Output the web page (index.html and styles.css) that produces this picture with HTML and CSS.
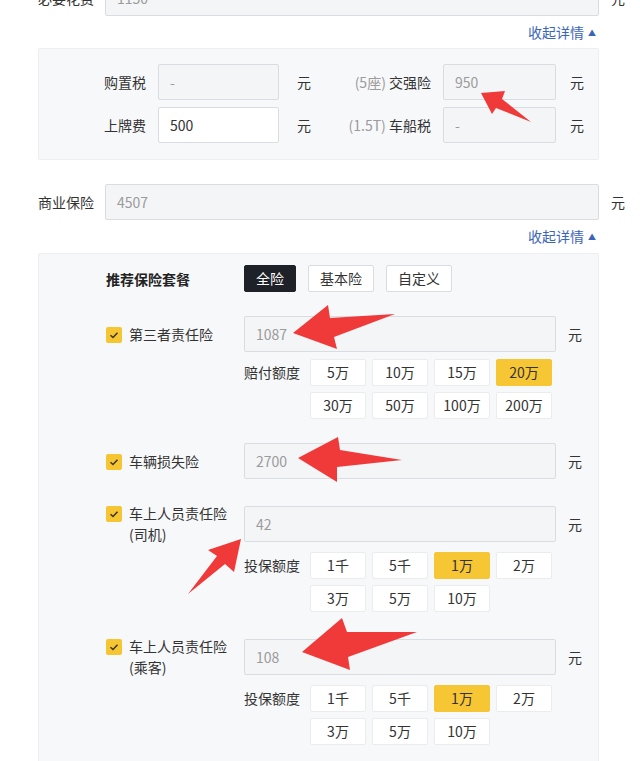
FILE: index.html
```html
<!DOCTYPE html>
<html lang="zh">
<head>
<meta charset="utf-8">
<title>保险费用</title>
<link rel="stylesheet" href="styles.css">
</head>
<body>
<div class="page">
  <div class="field field-top">
    <span class="field-label">必要花费</span>
    <div class="input is-disabled">1150</div>
    <span class="unit">元</span>
  </div>
  <div class="toggle-row"><span class="toggle">收起详情<span class="caret">▲</span></span></div>
  <div class="panel panel-fees">
    <span class="fee-label">购置税</span>
    <div class="input is-disabled">-</div>
    <span class="fee-unit">元</span>
    <span class="fee-label"><span class="muted">(5座)</span> 交强险</span>
    <div class="input is-disabled">950</div>
    <span class="fee-unit fee-unit-r">元</span>

    <span class="fee-label">上牌费</span>
    <div class="input">500</div>
    <span class="fee-unit">元</span>
    <span class="fee-label"><span class="muted">(1.5T)</span> 车船税</span>
    <div class="input is-disabled">-</div>
    <span class="fee-unit fee-unit-r">元</span>
  </div>

  <div class="field field-main">
    <span class="field-label">商业保险</span>
    <div class="input is-disabled">4507</div>
    <span class="unit">元</span>
  </div>
  <div class="toggle-row"><span class="toggle">收起详情<span class="caret">▲</span></span></div>

  <div class="panel panel-insure">
    <div class="plans">
      <span class="plans-title">推荐保险套餐</span>
      <div class="plan-btns">
        <span class="plan is-active">全险</span>
        <span class="plan">基本险</span>
        <span class="plan">自定义</span>
      </div>
    </div>

    <div class="items">
      <div class="item">
        <div class="item-name">
          <span class="check"><svg width="10" height="8" viewBox="0 0 10 8"><path d="M1.5 4.2 L4 6.5 L8.5 1.8" fill="none" stroke="#3a3320" stroke-width="1.5"/></svg></span>
          <span class="item-text">第三者责任险</span>
        </div>
        <div class="input is-disabled">1087</div>
        <span class="unit">元</span>
        <div class="opts">
          <span class="opts-label">赔付额度</span>
          <div class="opt-grid">
            <span class="opt">5万</span><span class="opt">10万</span><span class="opt">15万</span><span class="opt is-on">20万</span>
            <span class="opt">30万</span><span class="opt">50万</span><span class="opt">100万</span><span class="opt">200万</span>
          </div>
        </div>
      </div>

      <div class="item">
        <div class="item-name">
          <span class="check"><svg width="10" height="8" viewBox="0 0 10 8"><path d="M1.5 4.2 L4 6.5 L8.5 1.8" fill="none" stroke="#3a3320" stroke-width="1.5"/></svg></span>
          <span class="item-text">车辆损失险</span>
        </div>
        <div class="input is-disabled">2700</div>
        <span class="unit">元</span>
      </div>

      <div class="item">
        <div class="item-name">
          <span class="check"><svg width="10" height="8" viewBox="0 0 10 8"><path d="M1.5 4.2 L4 6.5 L8.5 1.8" fill="none" stroke="#3a3320" stroke-width="1.5"/></svg></span>
          <span class="item-text">车上人员责任险<br>(司机)</span>
        </div>
        <div class="input is-disabled">42</div>
        <span class="unit">元</span>
        <div class="opts">
          <span class="opts-label">投保额度</span>
          <div class="opt-grid">
            <span class="opt">1千</span><span class="opt">5千</span><span class="opt is-on">1万</span><span class="opt">2万</span>
            <span class="opt">3万</span><span class="opt">5万</span><span class="opt">10万</span>
          </div>
        </div>
      </div>

      <div class="item">
        <div class="item-name">
          <span class="check"><svg width="10" height="8" viewBox="0 0 10 8"><path d="M1.5 4.2 L4 6.5 L8.5 1.8" fill="none" stroke="#3a3320" stroke-width="1.5"/></svg></span>
          <span class="item-text">车上人员责任险<br>(乘客)</span>
        </div>
        <div class="input is-disabled">108</div>
        <span class="unit">元</span>
        <div class="opts">
          <span class="opts-label">投保额度</span>
          <div class="opt-grid">
            <span class="opt">1千</span><span class="opt">5千</span><span class="opt is-on">1万</span><span class="opt">2万</span>
            <span class="opt">3万</span><span class="opt">5万</span><span class="opt">10万</span>
          </div>
        </div>
      </div>
    </div>
  </div>
</div>

<svg class="marks" width="640" height="761" viewBox="0 0 640 761">
  <g fill="#f03a3a">
    <polygon points="481,93 505,91 502,99 531,122 496,108 492,114"/>
    <polygon points="293,333 328,305 330,318 395,314 334,337 337,349"/>
    <polygon points="298,458 338,437 340,450 402,460 337,467 337,482"/>
    <polygon points="241,539 234,572 225,564 188,594 217,556 208,550"/>
    <polygon points="302,652 342,618 347,632 417,632 348,657 350,670"/>
  </g>
</svg>
</body>
</html>
```

FILE: styles.css
```css
* { box-sizing: border-box; }

html, body {
  margin: 0;
  background: #fff;
}

body {
  position: relative;
  width: 640px;
  height: 761px;
  overflow: hidden;
  font-family: "Noto Sans CJK SC", "Microsoft YaHei", sans-serif;
  font-size: 14px;
  color: #333;
}

.page {
  padding-left: 38px;
}

/* top-level fields */
.field {
  display: grid;
  grid-template-columns: 67px 494px auto;
  align-items: center;
}

.field-top { margin-top: -20px; }
.field-main { margin-top: 24px; }

.field-label {
  text-align: right;
  padding-right: 12px;
  white-space: nowrap;
}

.input {
  height: 36px;
  line-height: 34px;
  border: 1px solid #d9dce1;
  border-radius: 2px;
  padding-left: 11px;
  background: #fff;
  color: #333;
  white-space: nowrap;
}

.input.is-disabled {
  background: #f4f5f7;
  color: #9b9b9b;
}

.unit {
  padding-left: 12px;
}

.toggle-row {
  width: 561px;
  height: 32px;
  line-height: 32px;
  text-align: right;
  padding-right: 3px;
}

.toggle {
  color: #3b66b8;
  font-size: 14px;
}

.caret {
  font-size: 8px;
  margin-left: 4px;
  vertical-align: 2px;
}

/* panels */
.panel {
  width: 561px;
  background: #f7f8fa;
  border: 1px solid #eceef1;
  border-radius: 2px;
}

.panel-fees {
  display: grid;
  grid-template-columns: 119px 121px 32px 132px 113px 1fr;
  row-gap: 7px;
  align-items: center;
  padding: 15px 0 16px;
}

.fee-label {
  text-align: right;
  padding-right: 12px;
  white-space: nowrap;
}

.fee-unit { padding-left: 18px; }
.fee-unit-r { padding-left: 14px; }

.muted { color: #9b9b9b; }

.panel-insure {
  margin-top: 1px;
  padding: 11px 0 40px 67px;
}

.plans {
  display: grid;
  grid-template-columns: 138px auto;
  align-items: center;
}

.plans-title {
  font-weight: 700;
  color: #222;
}

.plan-btns {
  display: flex;
  gap: 12px;
}

.plan {
  height: 27px;
  line-height: 25px;
  padding: 0 11px;
  border: 1px solid #d9dce1;
  border-radius: 2px;
  background: #fff;
}

.plan.is-active {
  background: #1e2128;
  border-color: #1e2128;
  color: #fff;
}

.items {
  display: flex;
  flex-direction: column;
  gap: 24px;
  margin-top: 24px;
}

.item {
  display: grid;
  grid-template-columns: 138px 312px auto;
  row-gap: 7px;
  align-items: center;
}

.item-name {
  display: flex;
  gap: 7px;
  line-height: 21px;
}

.check {
  flex: none;
  width: 16px;
  height: 16px;
  margin-top: 3px;
  border-radius: 2px;
  background: #f6c532;
  display: flex;
  align-items: center;
  justify-content: center;
}

.item-text { white-space: nowrap; }

.opts {
  grid-column: 2 / 4;
  display: flex;
}

.opts-label {
  width: 66px;
  line-height: 27px;
}

.opt-grid {
  display: grid;
  grid-template-columns: repeat(4, 56px);
  gap: 6px;
}

.opt {
  height: 27px;
  line-height: 25px;
  border: 1px solid #ebecee;
  border-radius: 2px;
  background: #fff;
  text-align: center;
}

.opt.is-on {
  background: #f7c634;
  border-color: #f7c634;
}

.marks {
  position: absolute;
  top: 0;
  left: 0;
  pointer-events: none;
}
```
